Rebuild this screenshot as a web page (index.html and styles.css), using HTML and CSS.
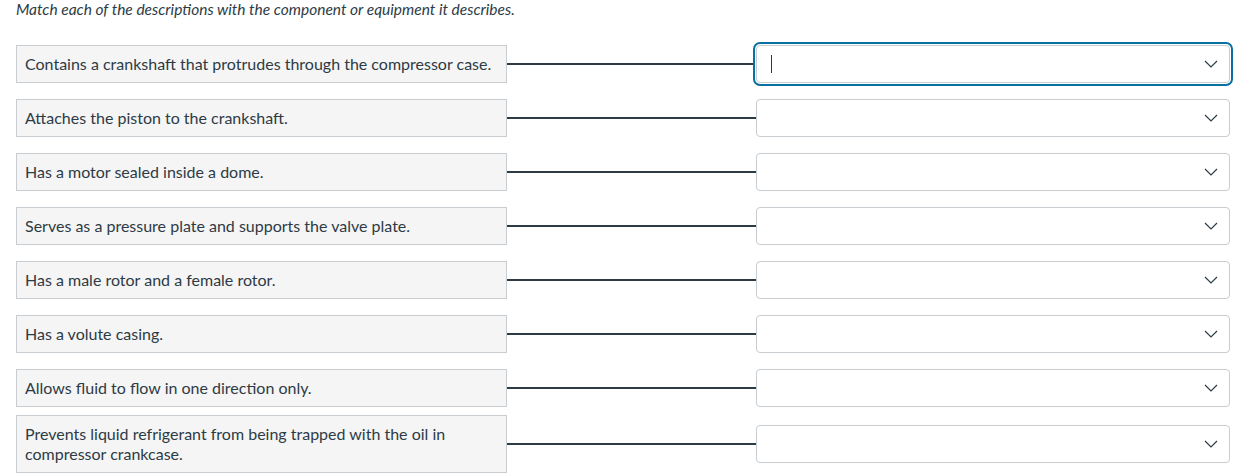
FILE: index.html
```html
<!DOCTYPE html>
<html>
<head>
<meta charset="utf-8">
<link rel="stylesheet" href="styles.css">
</head>
<body>
<p class="prompt">Match each of the descriptions with the component or equipment it describes.</p>
<div class="matches">
  <div class="row">
    <div class="desc">Contains a crankshaft that protrudes through the compressor case.</div>
    <div class="line"></div>
    <div class="select focused"><span class="caret"></span><svg class="chev" viewBox="0 0 14 8"><path d="M1 1 L7 7 L13 1" fill="none" stroke="#2d3b45" stroke-width="1.2"/></svg></div>
  </div>
  <div class="row">
    <div class="desc">Attaches the piston to the crankshaft.</div>
    <div class="line"></div>
    <div class="select"><svg class="chev" viewBox="0 0 14 8"><path d="M1 1 L7 7 L13 1" fill="none" stroke="#2d3b45" stroke-width="1.2"/></svg></div>
  </div>
  <div class="row">
    <div class="desc">Has a motor sealed inside a dome.</div>
    <div class="line"></div>
    <div class="select"><svg class="chev" viewBox="0 0 14 8"><path d="M1 1 L7 7 L13 1" fill="none" stroke="#2d3b45" stroke-width="1.2"/></svg></div>
  </div>
  <div class="row">
    <div class="desc">Serves as a pressure plate and supports the valve plate.</div>
    <div class="line"></div>
    <div class="select"><svg class="chev" viewBox="0 0 14 8"><path d="M1 1 L7 7 L13 1" fill="none" stroke="#2d3b45" stroke-width="1.2"/></svg></div>
  </div>
  <div class="row">
    <div class="desc">Has a male rotor and a female rotor.</div>
    <div class="line"></div>
    <div class="select"><svg class="chev" viewBox="0 0 14 8"><path d="M1 1 L7 7 L13 1" fill="none" stroke="#2d3b45" stroke-width="1.2"/></svg></div>
  </div>
  <div class="row">
    <div class="desc">Has a volute casing.</div>
    <div class="line"></div>
    <div class="select"><svg class="chev" viewBox="0 0 14 8"><path d="M1 1 L7 7 L13 1" fill="none" stroke="#2d3b45" stroke-width="1.2"/></svg></div>
  </div>
  <div class="row">
    <div class="desc">Allows fluid to flow in one direction only.</div>
    <div class="line"></div>
    <div class="select"><svg class="chev" viewBox="0 0 14 8"><path d="M1 1 L7 7 L13 1" fill="none" stroke="#2d3b45" stroke-width="1.2"/></svg></div>
  </div>
  <div class="row tall">
    <div class="desc">Prevents liquid refrigerant from being trapped with the oil in compressor crankcase.</div>
    <div class="line"></div>
    <div class="select"><svg class="chev" viewBox="0 0 14 8"><path d="M1 1 L7 7 L13 1" fill="none" stroke="#2d3b45" stroke-width="1.2"/></svg></div>
  </div>
</div>
</body>
</html>
```
FILE: styles.css
```css
html, body {
  margin: 0;
  padding: 0;
  background: #fff;
}
body {
  font-family: Lato, "Noto Sans", sans-serif;
  font-size: 16px;
  color: #2d3b45;
}
.prompt {
  margin: 0;
  padding: 0 0 0 16px;
  font-style: italic;
  font-size: 15.5px;
  line-height: 18px;
  color: #2d3b45;
}
.matches {
  display: flex;
  flex-direction: column;
  gap: 16px;
  padding: 27px 0 0 16px;
}
.row {
  display: flex;
  align-items: center;
}
.row.tall {
  margin-top: -8px;
}
.desc {
  box-sizing: border-box;
  width: 491px;
  min-height: 38px;
  padding: 8px 8px;
  line-height: 20px;
  background: #f5f5f5;
  border: 1px solid #c7cdd1;
}
.line {
  width: 249px;
  height: 2px;
  background: #2d3b45;
}
.select {
  box-sizing: border-box;
  width: 474px;
  height: 38px;
  border: 1px solid #c7cdd1;
  border-radius: 4px;
  background: #fff;
  display: flex;
  align-items: center;
  justify-content: flex-end;
  padding: 0 11px 0 12px;
  position: relative;
}
.select.focused {
  box-shadow: 0 0 0 1px #fff, 0 0 0 3px #0770a3;
}
.caret {
  position: absolute;
  left: 14px;
  top: 9px;
  width: 1px;
  height: 18px;
  background: #2d3b45;
}
.chev {
  width: 14px;
  height: 8px;
  display: block;
}
```
